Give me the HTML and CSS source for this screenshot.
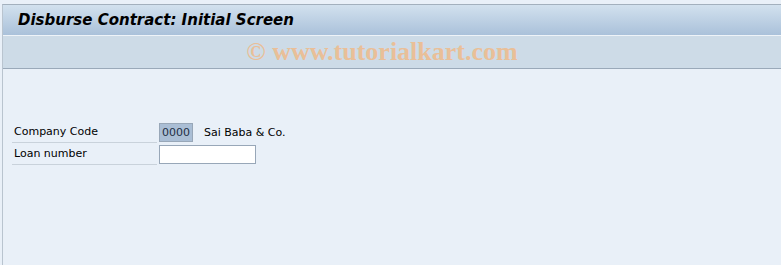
FILE: index.html
```html
<!DOCTYPE html>
<html lang="en">
<head>
  <meta charset="UTF-8" />
  <title>Disburse Contract: Initial Screen</title>
  <link rel="stylesheet" href="styles.css">
</head>
<body>
  <div class="frame">
    <header class="titlebar">
      <h1>Disburse Contract: Initial Screen</h1>
    </header>
    <div class="toolbar">
      <span class="watermark">&copy; www.tutorialkart.com</span>
    </div>

    <main class="screen">
      <div class="row">
        <label class="label">Company Code</label>
        <span class="field field-filled">0000</span>
        <span class="desc">Sai Baba &amp; Co.</span>
      </div>
      <div class="row">
        <label class="label">Loan number</label>
        <span class="field field-empty"></span>
      </div>
    </main>
  </div>
</body>
</html>
```

FILE: styles.css
```css
body {
  margin: 0;
  background-color: #e9f0f8;
  font-family: Tahoma, "DejaVu Sans", sans-serif;
  color: #000;
  height: 265px;
  overflow: hidden;
}
.frame {
  margin-top: 4px;
  margin-left: 2px;
  border-left: 1px solid #b9c4cf;
  border-top: 1px solid #a3b0bd;
  height: 260px;
}
.titlebar {
  height: 30px;
  background: linear-gradient(#d2e1ee, #aac1da);
  border-bottom: 1px solid #eef3f8;
  display: flex;
  align-items: center;
  padding-left: 15px;
}
h1 {
  margin: 0;
  font-family: "DejaVu Sans", sans-serif;
  font-size: 15px;
  font-weight: bold;
  font-style: italic;
  color: #000;
}
.toolbar {
  height: 32px;
  background-color: #cddbe7;
  border-bottom: 1px solid #9aa9b9;
  display: flex;
  align-items: center;
  justify-content: center;
}
.watermark {
  font-family: "Liberation Serif", serif;
  font-weight: bold;
  font-size: 26px;
  color: #e9bf98;
  margin-right: 20px;
}
.screen {
  padding: 52px 0 0 9px;
}
.row {
  display: flex;
  align-items: center;
  height: 22px;
  font-size: 11px;
}
.label {
  width: 143px;
  height: 21px;
  line-height: 21px;
  border-bottom: 1px solid #c9d2db;
  padding-left: 2px;
  margin-right: 2px;
}
.field {
  border: 1px solid #98a7b8;
  font-size: 11px;
  padding: 0 2px;
  box-sizing: border-box;
  height: 19px;
  line-height: 17px;
}
.field-filled {
  width: 34px;
  background-color: #aabed5;
  color: #1f2f46;
}
.field-empty {
  width: 97px;
  background-color: #fff;
}
.desc {
  margin-left: 11px;
}
```
